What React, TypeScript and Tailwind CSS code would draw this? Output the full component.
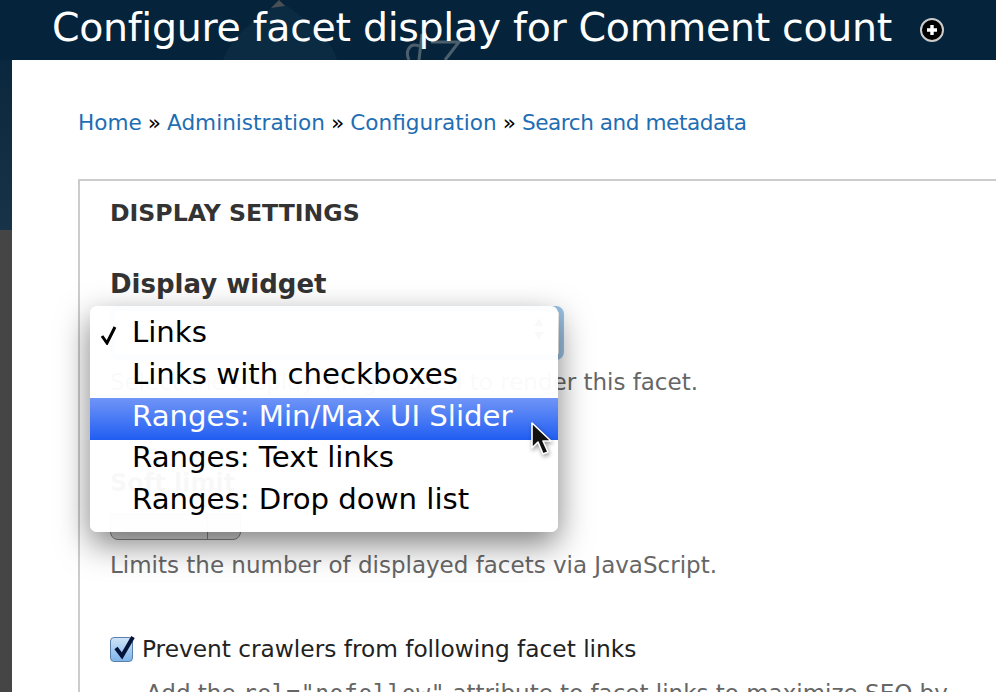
import React from 'react'

function SelectMenu() {
  const rowClass = 'pl-[42px] whitespace-nowrap relative'
  return (
    <div className="absolute left-[90px] top-[306px] w-[468px] h-[226px] rounded-[7px] bg-white/97 shadow-[0_12px_32px_rgba(0,0,0,0.5)] pt-[5px] text-[29.2px] text-black">
      <div className={`${rowClass} h-[41.5px] leading-[42px]`}>
        <svg className="absolute left-[10px] top-[14px]" width="18" height="20" viewBox="0 0 18 20">
          <path d="M2 11 L7 18 L15 2" fill="none" stroke="#000" strokeWidth="3" />
        </svg>
        Links
      </div>
      <div className={`${rowClass} h-[45.5px] leading-[42px]`}>Links with checkboxes</div>
      <div className={`${rowClass} h-[42px] leading-[36px] text-white bg-gradient-to-b from-[#6f94f6] to-[#1f5cf2]`}>Ranges: Min/Max UI Slider</div>
      <div className={`${rowClass} h-[41.5px] leading-[34px]`}>Ranges: Text links</div>
      <div className={`${rowClass} h-[41px] leading-[35px]`}>Ranges: Drop down list</div>
    </div>
  )
}

function Cursor() {
  return (
    <svg className="absolute left-[529px] top-[421px] drop-shadow-[1px_2px_2px_rgba(0,0,0,0.4)]" width="26" height="38" viewBox="0 0 26 38">
      <path d="M3 2 L3 27 L9 21 L14 33 L19 31 L14 20 L22 20 Z" fill="#111" stroke="#fff" strokeWidth="1.6" strokeLinejoin="round" />
    </svg>
  )
}

export default function App() {
  return (
    <div className="relative w-[996px] h-[692px] overflow-hidden bg-[#454545] font-['DejaVu_Sans',sans-serif]">
      <div className="absolute left-0 top-0 w-[12px] h-[230px] bg-gradient-to-b from-[#05233a] to-[#17334a]" />

      <header className="relative h-[60px] bg-[#05233a] pl-[52px] flex items-start">
        {/* faint drupal watermark behind the title */}
        <svg className="absolute left-[215px] top-0" width="260" height="60" viewBox="0 0 260 60">
          <path d="M64 0 C50 16 20 28 8 60 L122 60 C116 36 92 20 64 0 Z" fill="#0b2b42" />
          <path d="M64 0 L56 8 L70 6 Z" fill="#4a4f55" />
          <path d="M204 46 C194 42 190 52 194 60 M207 34 L204 60 M216 42 L244 42 L230 60" fill="none" stroke="#4c5f6c" strokeWidth="3" />
        </svg>
        <h1 className="relative text-[39.5px] leading-[54px] text-white whitespace-nowrap tracking-[-0.33px]">Configure facet display for Comment count</h1>
        <div className="relative ml-[28px] mt-[18px] w-[24px] h-[24px] rounded-full bg-black border-2 border-[#ccc] flex items-center justify-center">
          <svg width="14" height="14" viewBox="0 0 14 14">
            <path d="M7 2 V12 M2 7 H12" stroke="#fff" strokeWidth="3.4" />
          </svg>
        </div>
      </header>

      <main className="relative ml-[12px] h-[632px] bg-white pl-[66px] pt-[48px]">
        <nav className="flex gap-[6px] h-[30px] text-[21.6px] leading-[30px] text-[#1e6eb4] whitespace-nowrap">
          <a>Home</a>
          <span className="text-black">»</span>
          <a>Administration</a>
          <span className="text-black">»</span>
          <a>Configuration</a>
          <span className="text-black">»</span>
          <a className="tracking-[-0.45px]">Search and metadata</a>
        </nav>

        <section className="mt-[41px] w-[1000px] h-[600px] border-2 border-[#ccc] border-r-0 pl-[30px] pt-[16px] text-[#333]">
          <h2 className="text-[23.6px] leading-[32px] font-bold text-[#333] whitespace-nowrap">DISPLAY SETTINGS</h2>

          <label className="block mt-[39px] text-[26px] leading-[32px] font-bold whitespace-nowrap">Display widget</label>
          <div className="relative mt-[6px] w-[454px] h-[54px] rounded-[8px] bg-white border-[5px] border-[#9cc3e6]">
            <div className="absolute right-[15px] top-[7px] flex flex-col gap-[6px]">
              <div className="w-0 h-0 border-x-[5px] border-x-transparent border-b-[8px] border-b-[#555]" />
              <div className="w-0 h-0 border-x-[5px] border-x-transparent border-t-[8px] border-t-[#555]" />
            </div>
          </div>
          <p className="mt-[8px] text-[23px] leading-[28px] text-[#666] whitespace-nowrap">Select the display widget used to render this facet.</p>

          <label className="block mt-[72px] text-[24px] leading-[30px] font-bold text-[#333] whitespace-nowrap">Soft limit</label>
          <div className="mt-[16px] w-[131px] h-[26px] flex rounded-b-[8px] border border-[#888] bg-[#dedede]">
            <div className="w-[97px] border-r border-[#888]" />
          </div>
          <p className="mt-[10px] text-[23px] leading-[30px] text-[#666] whitespace-nowrap">Limits the number of displayed facets via JavaScript.</p>

          <div className="mt-[54px] flex items-center gap-[9px]">
            <div className="relative w-[23px] h-[25px] rounded-[4px] border border-[#5a7fa8] bg-gradient-to-b from-[#cfe3f8] to-[#7fb4ea]">
              <svg className="absolute -top-[4px] left-[1px]" width="24" height="26" viewBox="0 0 24 26">
                <path d="M4 14 L10 22 L21 3" fill="none" stroke="#03133a" strokeWidth="4" />
              </svg>
            </div>
            <span className="text-[23.25px] leading-[30px] text-[#222] whitespace-nowrap">Prevent crawlers from following facet links</span>
          </div>
          <p className="mt-[14px] ml-[36px] text-[23px] leading-[30px] text-[#666] whitespace-nowrap">
            Add the <code className="font-['DejaVu_Sans_Mono',monospace] text-[23px] tracking-[0.6px]">rel="nofollow"</code> attribute to facet links to maximize SEO by
          </p>
        </section>
      </main>

      <SelectMenu />
      <Cursor />
    </div>
  )
}
